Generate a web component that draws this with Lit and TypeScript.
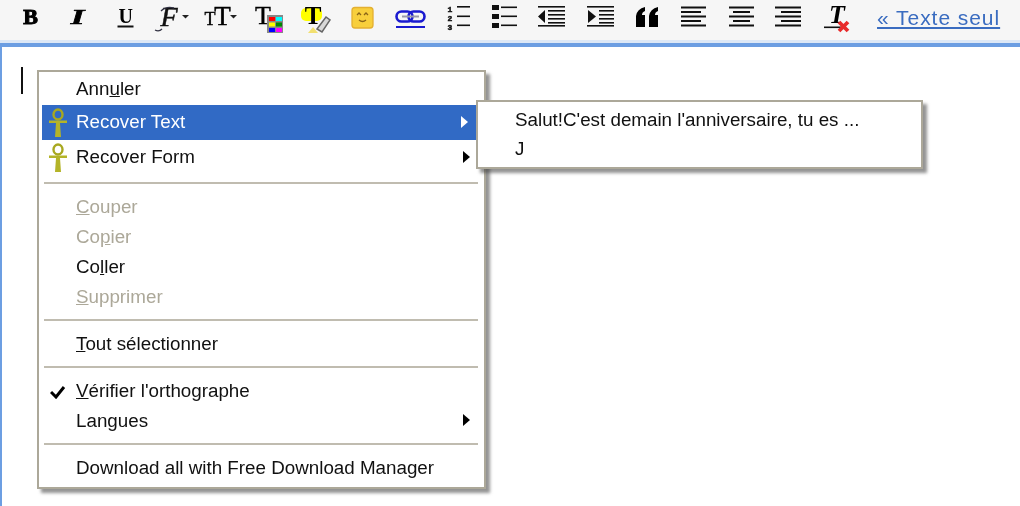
import { LitElement, html, css, svg } from "lit";
import { customElement } from "lit/decorators.js";

const serif = (t: string, x: number, y: number, size: number, extra = "") =>
  svg`<text x=${x} y=${y} font-size=${size} font-family="Liberation Serif, serif" text-anchor="middle" style=${extra} fill="#000">${t}</text>`;
const caret = (x: number, y: number) => svg`<path d="M${x} ${y}h7l-3.5 3.5z" fill="#222"/>`;
const lines = (rows: [number, number, number][], w = 2) =>
  rows.map(([x1, x2, y]) => svg`<rect x=${x1} y=${y} width=${x2 - x1} height=${w} fill="#111"/>`);
const num = (t: string, y: number) =>
  svg`<text x="16" y=${y} font-size="8" font-weight="700" font-family="Liberation Mono,monospace" text-anchor="middle" fill="#111" stroke="#111" stroke-width=".5">${t}</text>`;

const icons = [
  svg`${serif("B", 23.7, 24, 22, "font-weight:700;stroke:#000;stroke-width:1px")}`,
  svg`${serif("I", 23.7, 24, 22, "font-weight:700;font-style:italic;stroke:#000;stroke-width:.6px;transform-box:fill-box;transform-origin:center;transform:scaleX(1.6)")}`,
  svg`${serif("U", 23.7, 23, 20, "font-weight:700")}<rect x="15.5" y="25.5" width="16" height="2" fill="#111"/>`,
  svg`<text x="20" y="26" font-size="28" text-anchor="middle" font-family="Liberation Serif, serif" font-style="italic" fill="#111" stroke="#111" stroke-width=".5">F</text><path d="M12 11q5-5 13-3M13 29q-3 3-7 1" fill="none" stroke="#334" stroke-width="1.300"/>${caret(33, 15)}`,
  svg`${serif("T", 13, 25, 18, "stroke:#000;stroke-width:.4px")}${serif("T", 25.5, 25, 27, "stroke:#000;stroke-width:.5px")}${caret(33, 15)}`,
  svg`${serif("T", 19, 24, 26, "stroke:#000;stroke-width:.4px")}
    <rect x="23" y="15" width="16" height="18" fill="#888"/>
    <rect x="25" y="17" width="6" height="4" fill="#f00"/><rect x="32" y="17" width="6" height="4" fill="#0ff"/>
    <rect x="25" y="22.500" width="6" height="4" fill="#ff0"/><rect x="32" y="22.500" width="6" height="4" fill="#080"/>
    <rect x="25" y="28" width="6" height="4" fill="#00f"/><rect x="32" y="28" width="6" height="4" fill="#f0f"/>`,
  svg`<rect x="10" y="8" width="21" height="13" rx="5" fill="#ff0"/>${serif("T", 22, 24, 25, "font-weight:700")}
    <path d="M26 29l9-12 4 3-8 12z" fill="#d8d8d8" stroke="#666" stroke-width="1.500"/>
    <path d="M17 33l5-6 5 6z" fill="#f2e070"/>`,
  svg`<rect x="13" y="7.500" width="21" height="20.500" rx="3" fill="#f8cf3c" stroke="#e4b030" stroke-width="1.300"/>
    <path d="M18 15l2-2 2 2M25 15l2-2 2 2M20 20q3.500 3 7 0" fill="none" stroke="#8a6418" stroke-width="1.300"/>`,
  svg`<g fill="none" stroke="#1a1ad0" stroke-width="2.600"><rect x="10.500" y="11.500" width="16" height="10" rx="5"/><rect x="22.500" y="11.500" width="16" height="10" rx="5"/></g>
    <rect x="16" y="15.500" width="17" height="2" fill="#99a"/><rect x="10" y="26" width="29" height="2" fill="#1a1ad0"/>`,
  svg`${num("1", 11.5)}${num("2", 20.5)}${num("3", 29.5)}${lines([[23, 36, 6], [23, 36, 15.5], [23, 36, 24.5]], 1.6)}`,
  svg`<g fill="#111"><rect x="11" y="5" width="7" height="5"/><rect x="11" y="14" width="7" height="5"/><rect x="11" y="23" width="7" height="5"/></g>${lines([[20, 36, 6.5], [20, 36, 15.5], [20, 36, 24.5]], 1.6)}`,
  svg`${lines([[10, 37, 6], [20, 37, 10], [20, 37, 14], [20, 37, 18], [20, 37, 22], [10, 37, 25]], 1.6)}<path d="M17 10v13l-7-6.500z" fill="#111"/>`,
  svg`${lines([[11, 38, 6], [23, 38, 10], [23, 38, 14], [23, 38, 18], [23, 38, 22], [11, 38, 25]], 1.6)}<path d="M12 10v13l8-6.500z" fill="#111"/>`,
  svg`<path d="M13 16q1-7 9-9v4q-3 1-3 4h3v12H13zM26 16q1-7 9-9v4q-3 1-3 4h3v12H26z" fill="#000"/>`,
  svg`${lines([[11, 36, 6.500], [11, 31, 11], [11, 36, 15.500], [11, 31, 20], [11, 36, 24.500]], 2)}`,
  svg`${lines([[11, 36, 6.500], [15, 32, 11], [11, 36, 15.500], [15, 32, 20], [11, 36, 24.500]], 2)}`,
  svg`${lines([[10, 36, 6.500], [16, 36, 11], [10, 36, 15.500], [16, 36, 20], [10, 36, 24.500]], 2)}`,
  svg`<text x="24" y="23" font-size="26" text-anchor="middle" font-family="Liberation Serif,serif" font-style="italic" font-weight="700" fill="#000">T</text><rect x="11" y="26.500" width="21" height="1.600" fill="#111"/>
    <path d="M26 22l9 9M35 22l-9 9" stroke="#e82a2a" stroke-width="3.800"/>`,
];

type Item = { label?: unknown; sep?: boolean; off?: boolean; arrow?: boolean; ankh?: boolean; check?: boolean; hot?: boolean; tall?: boolean; first?: boolean };

const u = (a: string, b: string, c: string) => html`${a}<u>${b}</u>${c}`;

const items: Item[] = [
  { label: u("Ann", "u", "ler"), first: true },
  { label: "Recover Text", ankh: true, arrow: true, hot: true, tall: true },
  { label: "Recover Form", ankh: true, arrow: true, tall: true },
  { sep: true },
  { label: u("", "C", "ouper"), off: true },
  { label: u("Co", "p", "ier"), off: true },
  { label: u("Co", "l", "ler") },
  { label: u("", "S", "upprimer"), off: true },
  { sep: true },
  { label: u("", "T", "out sélectionner") },
  { sep: true },
  { label: u("", "V", "érifier l'orthographe"), check: true },
  { label: u("Lan", "g", "ues"), arrow: true },
  { sep: true },
  { label: "Download all with Free Download Manager" },
];

const ankh = svg`<svg class="ankh" width="20" height="30" viewBox="0 0 20 30">
  <ellipse cx="10" cy="6.500" rx="4.500" ry="5" fill="none" stroke="#a8a820" stroke-width="2.400"/>
  <path d="M1 12.500h18v2.500H12l1 14H7l1-14H1z" fill="#b4b428"/>
</svg>`;

@customElement("app-root")
export class AppRoot extends LitElement {
  static styles = css`
    :host { display: block; width: 1020px; height: 506px; overflow: hidden; position: relative; background: #fff; font-family: "Liberation Sans", sans-serif; filter: blur(0.35px); }
    .toolbar { display: flex; align-items: flex-start; height: 40px; background: #f6f6f6; padding-left: 7px; }
    .btn { width: 47.4px; height: 40px; flex: none; }
    .btn svg { display: block; }
    .link { margin-left: 17px; margin-top: 6px; font-size: 21px; letter-spacing: 0.95px; color: #3a6cc0; text-decoration: underline; white-space: nowrap; }
    .rule { height: 3px; background: #dde8f6; }
    .blue { height: 4px; background: #6c9ee2; }
    .editor { height: 459px; border-left: 2px solid #6c9ee2; padding: 20px 0 0 19px; box-sizing: border-box; }
    .cursor { width: 2px; height: 27px; background: #111; }
    .menu { position: absolute; left: 37px; top: 70px; width: 449px; height: 419px; box-sizing: border-box; background: #fff; border: 2px solid #aca899; box-shadow: 4px 4px 3px rgba(60,60,60,.55); padding: 2px 3px; font-size: 18.8px; color: #111; }
    .item { display: flex; align-items: center; height: 30px; padding-left: 34px; position: relative; white-space: nowrap; }
    .item span { padding-bottom: 1px; }
    .item.first { height: 31px; }
    .item.tall { height: 35px; }
    .item.hot { background: #316ac5; color: #fff; margin-right: 2px; }
    .item.off { color: #aca899; }
    .sep { height: 2px; background: #c0bcb0; margin: 7px 3px 8px 2px; }
    .ankh { position: absolute; left: 6px; top: 3px; }
    .check { position: absolute; left: 8px; top: 9px; }
    .arrow { position: absolute; right: 11px; top: 50%; margin-top: -7px; width: 0; height: 0; border-left: 7px solid currentColor; border-top: 6.500px solid transparent; border-bottom: 6.500px solid transparent; }
    .item:not(.hot) .arrow { color: #000; }
    .sub { position: absolute; left: 476px; top: 100px; width: 447px; height: 69px; box-sizing: border-box; background: #fff; border: 2px solid #aca899; box-shadow: 4px 4px 3px rgba(60,60,60,.55); padding: 3px 0 0 37px; font-size: 18.8px; color: #111; }
    .sub div { height: 29px; display: flex; align-items: center; white-space: nowrap; }
  `;

  render() {
    return html`
      <div class="toolbar">
        ${icons.map((i) => html`<div class="btn"><svg width="47" height="40" viewBox="0 0 47 40">${i}</svg></div>`)}
        <span class="link">« Texte seul</span>
      </div>
      <div class="rule"></div>
      <div class="blue"></div>
      <div class="editor"><div class="cursor"></div></div>
      <div class="menu">
        ${items.map((it) =>
          it.sep
            ? html`<div class="sep"></div>`
            : html`<div class="item ${it.hot ? "hot" : ""} ${it.off ? "off" : ""} ${it.tall ? "tall" : ""} ${it.first ? "first" : ""}">
                ${it.ankh ? ankh : ""}
                ${it.check ? html`<svg class="check" width="16" height="14" viewBox="0 0 16 14"><path d="M1 7l5 5 8-10" fill="none" stroke="#000" stroke-width="3"/></svg>` : ""}
                <span>${it.label}</span>
                ${it.arrow ? html`<i class="arrow"></i>` : ""}
              </div>`
        )}
      </div>
      <div class="sub">
        <div>Salut!C'est demain l'anniversaire, tu es ...</div>
        <div>J</div>
      </div>
    `;
  }
}
